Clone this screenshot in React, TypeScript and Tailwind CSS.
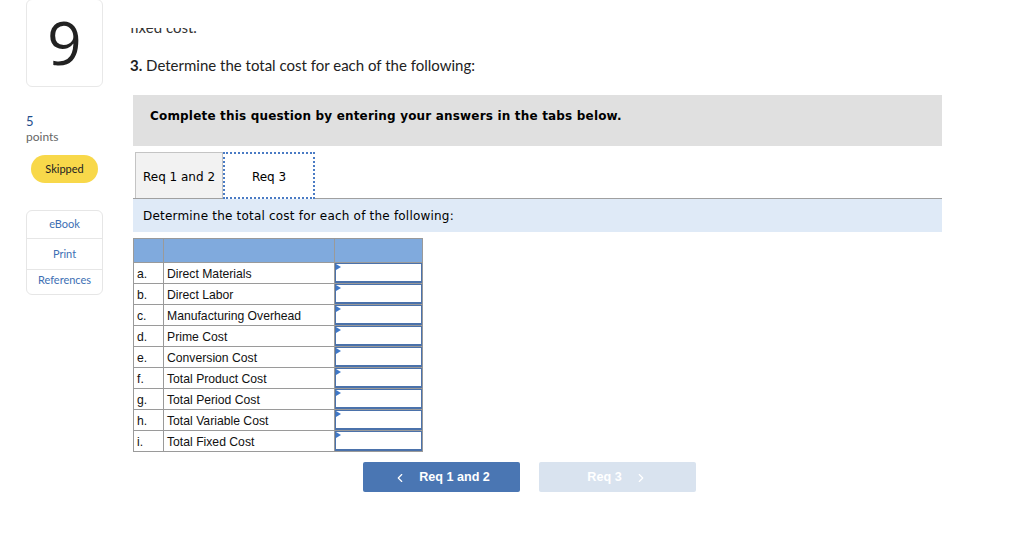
import React from 'react';
import { ChevronLeft, ChevronRight } from 'lucide-react';

const rows = [
  { key: 'a.', label: 'Direct Materials' },
  { key: 'b.', label: 'Direct Labor' },
  { key: 'c.', label: 'Manufacturing Overhead' },
  { key: 'd.', label: 'Prime Cost' },
  { key: 'e.', label: 'Conversion Cost' },
  { key: 'f.', label: 'Total Product Cost' },
  { key: 'g.', label: 'Total Period Cost' },
  { key: 'h.', label: 'Total Variable Cost' },
  { key: 'i.', label: 'Total Fixed Cost' },
];

const Sidebar: React.FC = () => (
  <div className="w-[130px] shrink-0 pl-[26px] font-['Lato',sans-serif]">
    <div className="-mt-px flex h-[88px] w-[77px] items-center justify-center rounded-md border border-[#e8e8e8] font-['Open_Sans',sans-serif] text-[60px] leading-none text-[#222]">
      <span className="-mt-[2px]">9</span>
    </div>
    <div className="mt-[26px] text-[13px] leading-[16px] text-[#1f4e8c]">5</div>
    <div className="text-[12px] leading-[16px] text-[#666]">points</div>
    <div className="ml-[5px] mt-[10px] flex h-[28px] w-[67px] items-center justify-center rounded-full bg-[#f8d84a] text-[11px] text-[#222]">
      Skipped
    </div>
    <div className="mt-[27px] w-[77px] rounded-md border border-[#e6e6e6] text-[11px] text-[#3d6fb4]">
      <div className="flex h-[28px] items-center justify-center border-b border-[#e6e6e6]">eBook</div>
      <div className="flex h-[31px] items-center justify-center border-b border-[#e6e6e6]">Print</div>
      <div className="flex h-[24px] items-start justify-center pt-[2px]">References</div>
    </div>
  </div>
);

const AnswerTable: React.FC = () => (
  <table className="mt-[6px] border-collapse font-['Liberation_Sans',Arial,sans-serif] text-[12.2px] text-[#111]">
    <thead>
      <tr className="h-[24px] bg-[#80aadd]">
        <th className="w-[30px] border border-[#9a9a9a]" />
        <th className="w-[171px] border border-[#9a9a9a]" />
        <th className="w-[88px] border border-[#9a9a9a]" />
      </tr>
    </thead>
    <tbody>
      {rows.map((r) => (
        <tr key={r.key} className="h-[21px]">
          <td className="border border-[#9a9a9a] pl-[3px] pt-[2px] leading-none">{r.key}</td>
          <td className="border border-[#9a9a9a] pl-[3px] pt-[2px] leading-none">{r.label}</td>
          <td className="relative border border-[#9a9a9a] p-0">
            <div className="h-[20px] w-full border border-b-2 border-[#4b72ab] bg-white" />
            <div className="absolute left-[1px] top-[1px] h-0 w-0 border-y-[3px] border-l-[5px] border-y-transparent border-l-[#3f78c8]" />
          </td>
        </tr>
      ))}
    </tbody>
  </table>
);

export default function App() {
  return (
    <div className="flex min-h-[538px] w-[1024px] bg-white">
      <Sidebar />
      <div className="w-[812px] font-['Lato',sans-serif]">
        <div className="mt-[28px] h-[7px] overflow-hidden">
          <div className="-mt-[8px] text-[15px] leading-[15px] text-[#333]">fixed cost.</div>
        </div>
        <div className="mt-[20px] text-[15px] leading-[20px] text-[#222]">
          <span className="font-bold">3.</span> Determine the total cost for each of the following:
        </div>

        <div className="ml-[3px] w-[809px]">
          <div className="mt-[20px] h-[51px] bg-[#e0e0e0] pl-[17px] pt-[13px] font-['DejaVu_Sans',Verdana,sans-serif] text-[12px] font-bold leading-[16px] tracking-[0.18px] text-black">
            Complete this question by entering your answers in the tabs below.
          </div>

          <div className="mt-[7px] flex h-[46px] items-end border-b border-[#a0a0a0] pl-[2px] font-['DejaVu_Sans',Verdana,sans-serif] text-[12px] text-black">
            <div className="flex h-[46px] w-[88px] items-center justify-center border border-b-0 border-[#c4c4c4] bg-[#f2f2f2] pt-[2px]">
              Req 1 and 2
            </div>
            <div className="-mb-px flex h-[47px] w-[92px] items-center justify-center border-2 border-dotted border-[#4a7bc4] bg-white pt-[2px]">
              Req 3
            </div>
          </div>

          <div className="flex h-[33px] items-center bg-[#dfeaf7] pl-[10px] pt-[1px] font-['DejaVu_Sans',Verdana,sans-serif] text-[12px] tracking-[0.2px] text-black">
            Determine the total cost for each of the following:
          </div>

          <AnswerTable />

          <div className="ml-[230px] mt-[10px] flex gap-[19px] font-['Liberation_Sans',Arial,sans-serif] text-[12.6px] font-bold text-white">
            <button className="flex h-[30px] w-[157px] items-center justify-center gap-[12px] rounded-[2px] bg-[#4a76b3] pt-[1px]">
              <ChevronLeft size={14} strokeWidth={2} />
              <span>Req 1 and 2</span>
            </button>
            <button className="flex h-[30px] w-[157px] items-center justify-center gap-[12px] rounded-[2px] bg-[#d9e3ef] pt-[1px]">
              <span>Req 3</span>
              <ChevronRight size={14} strokeWidth={2} />
            </button>
          </div>
        </div>
      </div>
    </div>
  );
}
